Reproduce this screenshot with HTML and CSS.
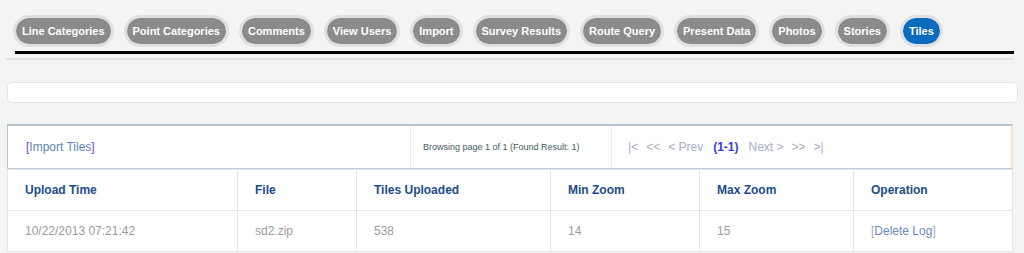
FILE: index.html
```html
<!DOCTYPE html>
<html lang="en">
<head>
    <meta charset="UTF-8">
    <meta name="viewport" content="width=device-width, initial-scale=1.0">
    <title>Tiles</title>
    <link rel="stylesheet" href="styles.css">
</head>
<body>

<div class="tabs">
    <a class="tab" href="#">Line Categories</a>
    <a class="tab" href="#">Point Categories</a>
    <a class="tab" href="#">Comments</a>
    <a class="tab" href="#">View Users</a>
    <a class="tab" href="#">Import</a>
    <a class="tab" href="#">Survey Results</a>
    <a class="tab" href="#">Route Query</a>
    <a class="tab" href="#">Present Data</a>
    <a class="tab" href="#">Photos</a>
    <a class="tab" href="#">Stories</a>
    <a class="tab active" href="#">Tiles</a>
</div>
<div class="tabs-rule"></div>
<div class="tabs-shadow"></div>

<div class="message-box"></div>

<div class="grid-box">
    <div class="toolbar">
        <div class="toolbar-cell">
            <span class="bracket">[</span><a class="link" href="#">Import Tiles</a><span class="bracket">]</span>
        </div>
        <div class="toolbar-cell browse">Browsing page 1 of 1 (Found Result: 1)</div>
        <div class="toolbar-cell pager">
            <span>|&lt;</span>
            <span>&lt;&lt;</span>
            <span>&lt; Prev</span>
            <span class="current">(1-1)</span>
            <span>Next &gt;</span>
            <span>&gt;&gt;</span>
            <span>&gt;|</span>
        </div>
    </div>

    <table class="grid">
        <colgroup>
            <col style="width:230px">
            <col style="width:119px">
            <col style="width:194px">
            <col style="width:149px">
            <col style="width:154px">
            <col>
        </colgroup>
        <tr>
            <th>Upload Time</th>
            <th>File</th>
            <th>Tiles Uploaded</th>
            <th>Min Zoom</th>
            <th>Max Zoom</th>
            <th>Operation</th>
        </tr>
        <tr>
            <td>10/22/2013 07:21:42</td>
            <td>sd2.zip</td>
            <td>538</td>
            <td>14</td>
            <td>15</td>
            <td><span class="op">[</span><a class="op-link" href="#">Delete Log</a><span class="op">]</span></td>
        </tr>
    </table>
</div>

</body>
</html>
```

FILE: styles.css
```css
body {
    margin: 0;
    background-color: #f4f4f4;
    font-family: "Liberation Sans", Arial, sans-serif;
    overflow: hidden;
}
.tabs {
    display: flex;
    padding: 15px 0 0 13px;
}
.tab {
    display: block;
    height: 26px;
    line-height: 26px;
    padding: 0 6px;
    margin-right: 10px;
    border: 3px solid #e0e0e0;
    border-radius: 16px;
    background-color: #8b8b8b;
    background-clip: padding-box;
    color: #fff;
    font-size: 11px;
    font-weight: bold;
    text-decoration: none;
    white-space: nowrap;
}
.tab.active {
    background-color: #0b6bbf;
}
.tabs-rule {
    height: 3px;
    margin: 4px 10px 0 15px;
    background-color: #000;
}
.tabs-shadow {
    height: 2px;
    margin: 4px 11px 0 6px;
    background-color: #e2e2e2;
}
.message-box {
    height: 19px;
    margin: 22px 6px 0 7px;
    background-color: #fff;
    border: 1px solid #e6e6e6;
    border-radius: 4px;
}
.grid-box {
    margin: 21px 11px 0 7px;
    background-color: #fff;
}
.toolbar {
    display: grid;
    grid-template-columns: 402px 202px 1fr;
    height: 42px;
    border-top: 2px solid #b6c3d1;
    border-left: 1px solid #b6c3d1;
    border-right: 2px solid #f3e4bb;
    border-bottom: 1px solid #bccadb;
}
.toolbar-cell {
    display: flex;
    align-items: center;
    font-size: 12px;
}
.toolbar-cell:first-child {
    padding-left: 18px;
}
.bracket {
    color: #6a4af0;
}
.link {
    color: #6283ba;
    text-decoration: none;
}
.browse {
    padding-left: 12px;
    border-left: 1px solid #ececec;
    border-right: 1px solid #ececec;
    font-size: 9px;
    color: #3f6060;
}
.pager {
    padding-left: 16px;
    gap: 8px;
    color: #a9adc2;
}
.pager .current {
    margin: 0 2px;
    font-weight: bold;
    color: #3b3be0;
}
.grid {
    width: 1006px;
    border-collapse: collapse;
    table-layout: fixed;
}
.grid th,
.grid td {
    height: 40px;
    padding: 0 0 0 17px;
    text-align: left;
    font-size: 12px;
    border: 1px solid #e6e6e6;
}
.grid th {
    color: #1b4c8a;
}
.grid td {
    color: #9b9b9b;
}
.op {
    color: #a9a9a9;
}
.op-link {
    color: #6a8bc0;
    text-decoration: none;
}
```
